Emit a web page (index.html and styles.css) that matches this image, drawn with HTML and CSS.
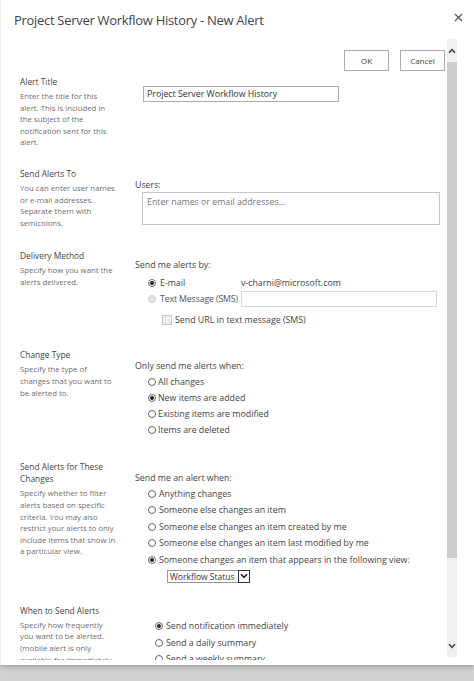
FILE: index.html
```html
<!DOCTYPE html>
<html lang="en">
<head>
    <meta charset="UTF-8">
    <meta name="viewport" content="width=device-width, initial-scale=1.0">
    <title>New Alert</title>
    <link rel="stylesheet" href="styles.css">
</head>
<body>

    <div class="dialog">
        <div class="dlg-head">
            <h1 class="dlg-title">Project Server Workflow History - New Alert</h1>
            <span class="dlg-close">
                <svg width="9" height="9" viewBox="0 0 9 9"><path d="M1 1L8 8M8 1L1 8" stroke="#555" stroke-width="1.3" fill="none"/></svg>
            </span>
        </div>

        <div class="dlg-body">
            <div class="dlg-content">
                <div class="toolbar">
                    <button class="btn">OK</button>
                    <button class="btn">Cancel</button>
                </div>

                <!-- Alert Title -->
                <div class="section">
                    <div class="sec-info">
                        <div class="sec-title">Alert Title</div>
                        <div class="sec-desc">Enter the title for this alert. This is included in the subject of the notification sent for this alert.</div>
                    </div>
                    <div class="sec-ctrl">
                        <div class="textbox title-box">Project Server Workflow History</div>
                    </div>
                </div>

                <!-- Send Alerts To -->
                <div class="section sec-users">
                    <div class="sec-info">
                        <div class="sec-title">Send Alerts To</div>
                        <div class="sec-desc">You can enter user names or e-mail addresses. Separate them with semicolons.</div>
                    </div>
                    <div class="sec-ctrl">
                        <div class="field-label">Users:</div>
                        <div class="textbox users-box">Enter names or email addresses...</div>
                    </div>
                </div>

                <!-- Delivery Method -->
                <div class="section sec-delivery">
                    <div class="sec-info">
                        <div class="sec-title">Delivery Method</div>
                        <div class="sec-desc">Specify how you want the alerts delivered.</div>
                    </div>
                    <div class="sec-ctrl">
                        <div class="field-label">Send me alerts by:</div>
                        <div class="opt first-opt">
                            <span class="opt-cell"><span class="radio checked"></span><span class="gap">E-mail</span></span>
                            <span>v-charni@microsoft.com</span>
                        </div>
                        <div class="opt">
                            <span class="opt-cell"><span class="radio disabled"></span><span class="gap muted">Text Message (SMS)</span></span>
                            <span class="sms-box"></span>
                        </div>
                        <div class="opt check-row">
                            <span class="checkbox"></span>
                            <span class="gap">Send URL in text message (SMS)</span>
                        </div>
                    </div>
                </div>

                <!-- Change Type -->
                <div class="section sec-change">
                    <div class="sec-info">
                        <div class="sec-title">Change Type</div>
                        <div class="sec-desc">Specify the type of changes that you want to be alerted to.</div>
                    </div>
                    <div class="sec-ctrl">
                        <div class="field-label">Only send me alerts when:</div>
                        <div class="opt-list">
                            <div class="opt"><span class="radio"></span>All changes</div>
                            <div class="opt"><span class="radio checked"></span>New items are added</div>
                            <div class="opt"><span class="radio"></span>Existing items are modified</div>
                            <div class="opt"><span class="radio"></span>Items are deleted</div>
                        </div>
                    </div>
                </div>

                <!-- Send Alerts for These Changes -->
                <div class="section sec-filter">
                    <div class="sec-info">
                        <div class="sec-title">Send Alerts for These Changes</div>
                        <div class="sec-desc">Specify whether to filter alerts based on specific criteria. You may also restrict your alerts to only include items that show in a particular view.</div>
                    </div>
                    <div class="sec-ctrl">
                        <div class="field-label">Send me an alert when:</div>
                        <div class="opt-list">
                            <div class="opt tall"><span class="radio"></span>Anything changes</div>
                            <div class="opt tall"><span class="radio"></span>Someone else changes an item</div>
                            <div class="opt tall"><span class="radio"></span>Someone else changes an item created by me</div>
                            <div class="opt tall"><span class="radio"></span>Someone else changes an item last modified by me</div>
                            <div class="opt tall"><span class="radio checked"></span>Someone changes an item that appears in the following view:</div>
                        </div>
                        <div class="select">
                            <span class="select-text">Workflow Status</span>
                            <span class="select-arrow">
                                <svg width="8" height="6" viewBox="0 0 8 6"><path d="M1 1.2L4 4.4L7 1.2" stroke="#222" stroke-width="1.6" fill="none"/></svg>
                            </span>
                        </div>
                    </div>
                </div>

                <!-- When to Send Alerts -->
                <div class="section">
                    <div class="sec-info">
                        <div class="sec-title">When to Send Alerts</div>
                        <div class="sec-desc">Specify how frequently you want to be alerted. (mobile alert is only available for immediately send)</div>
                    </div>
                    <div class="sec-ctrl when">
                        <div class="opt tall"><span class="radio checked"></span>Send notification immediately</div>
                        <div class="opt tall"><span class="radio"></span>Send a daily summary</div>
                        <div class="opt tall"><span class="radio"></span>Send a weekly summary</div>
                    </div>
                </div>
            </div>

            <div class="scrollbar">
                <div class="sb-btn">
                    <svg width="8" height="6" viewBox="0 0 8 6"><path d="M1 4.8L4 1.6L7 4.8" stroke="#444" stroke-width="1.6" fill="none"/></svg>
                </div>
                <div class="sb-thumb"></div>
                <div class="sb-track"></div>
                <div class="sb-btn">
                    <svg width="8" height="6" viewBox="0 0 8 6"><path d="M1 1.2L4 4.4L7 1.2" stroke="#444" stroke-width="1.6" fill="none"/></svg>
                </div>
            </div>
        </div>
    </div>

</body>
</html>
```

FILE: styles.css
```css
* {
    box-sizing: border-box;
    margin: 0;
    padding: 0;
}

body {
    font-family: "Open Sans", "Noto Sans", Arial, sans-serif;
    background: linear-gradient(#c4c4c4, #d2d2d2);
    height: 681px;
    overflow: hidden;
    color: #444;
}

.dialog {
    height: 665px;
    background-color: #fff;
    display: flex;
    flex-direction: column;
    box-shadow: 0 2px 5px rgba(0, 0, 0, 0.25);
    border-left: 1px solid #eee;
}

.dlg-head {
    height: 39px;
    flex: none;
    display: flex;
    align-items: center;
    justify-content: space-between;
    padding: 0 11px 0 13px;
}

.dlg-title {
    font-size: 13px;
    font-weight: 400;
    letter-spacing: -0.3px;
    color: #444;
}

.dlg-close {
    display: flex;
    margin-top: -5px;
}

.dlg-body {
    flex: 1;
    min-height: 0;
    display: flex;
    padding-right: 17px;
    padding-bottom: 5px;
}

.dlg-content {
    flex: 1;
    overflow: hidden;
    padding-left: 19px;
    padding-right: 2px;
}

/* Buttons */
.toolbar {
    display: flex;
    justify-content: flex-end;
    gap: 11px;
    padding-top: 11px;
    margin-bottom: 5px;
}

.btn {
    width: 45px;
    height: 21px;
    border: 1px solid #ababab;
    background-color: #fdfdfd;
    font-family: inherit;
    font-size: 8px;
    color: #444;
}

/* Sections */
.section {
    display: grid;
    grid-template-columns: 115px 1fr;
    padding-bottom: 19px;
}

.sec-users {
    padding-bottom: 21px;
}

.sec-delivery {
    padding-bottom: 21px;
}

.sec-change {
    padding-bottom: 23px;
}

.sec-filter {
    padding-bottom: 22px;
}

.sec-info {
    width: 96px;
}

.sec-title {
    font-size: 8.4px;
    line-height: 12px;
    color: #444;
}

.sec-desc {
    font-size: 7.8px;
    line-height: 11.6px;
    color: #6f6f6f;
    margin-top: 3px;
}

.sec-ctrl {
    padding-top: 10px;
    font-size: 8.8px;
    color: #444;
}

.sec-delivery .sec-ctrl {
    padding-top: 8px;
}

.sec-ctrl.when {
    padding-top: 13px;
    padding-left: 7px;
}

.field-label {
    line-height: 14px;
}

.textbox {
    border: 1px solid #ababab;
    margin-left: 8px;
    color: #333;
    padding: 0 3px;
}

.title-box {
    width: 196px;
    height: 16px;
    line-height: 14px;
}

.users-box {
    margin-left: 7px;
    width: 298px;
    height: 33px;
    line-height: 18px;
    color: #777;
    border-color: #c6c6c6;
    padding: 0 4px;
}

/* Options */
.opt {
    display: flex;
    align-items: center;
    height: 16px;
    padding-left: 13px;
    white-space: nowrap;
}

.opt-list {
    margin-top: 1px;
}

.sec-filter .opt-list {
    margin-top: 0;
}

.opt.tall {
    height: 16.5px;
}

.first-opt {
    margin-top: 3px;
}

.opt-cell {
    display: flex;
    align-items: center;
    width: 93px;
}

.gap {
    margin-left: 2px;
}

.check-row .gap {
    margin-left: 3px;
}

.muted {
    color: #555;
    letter-spacing: -0.15px;
}

.radio {
    width: 8px;
    height: 8px;
    border: 1px solid #666;
    border-radius: 50%;
    margin-right: 2px;
    flex: none;
    display: flex;
    align-items: center;
    justify-content: center;
}

.opt.tall .radio {
    margin-right: 3px;
}

.radio.checked::after {
    content: "";
    width: 4px;
    height: 4px;
    border-radius: 50%;
    background-color: #222;
}

.radio.disabled {
    border-color: #d0d0d0;
    background-color: #e2e2e2;
}

.sms-box {
    width: 196px;
    height: 16px;
    border: 1px solid #d8d8d8;
}

.check-row {
    padding-left: 27px;
    margin-top: 5px;
}

.checkbox {
    width: 10px;
    height: 10px;
    border: 1px solid #c8c8c8;
    background-color: #ebebeb;
}

/* Select */
.select {
    display: flex;
    align-items: stretch;
    width: 83px;
    height: 13px;
    margin: 2px 0 0 32px;
    border: 1px solid #999;
}

.select-text {
    flex: 1;
    font-size: 8.5px;
    line-height: 11px;
    padding-left: 2px;
    color: #333;
}

.select-arrow {
    width: 12px;
    border: 1px solid #333;
    margin: -1px -1px -1px 0;
    display: flex;
    align-items: center;
    justify-content: center;
    background-color: #fff;
}

/* Scrollbar */
.scrollbar {
    width: 10px;
    flex: none;
    display: flex;
    flex-direction: column;
    background-color: #f0f0f0;
    margin-bottom: 3px;
}

.sb-btn {
    height: 23px;
    display: flex;
    align-items: center;
    justify-content: center;
}

.sb-thumb {
    height: 496px;
    background-color: #cdcdcd;
}

.sb-track {
    flex: 1;
}
```
